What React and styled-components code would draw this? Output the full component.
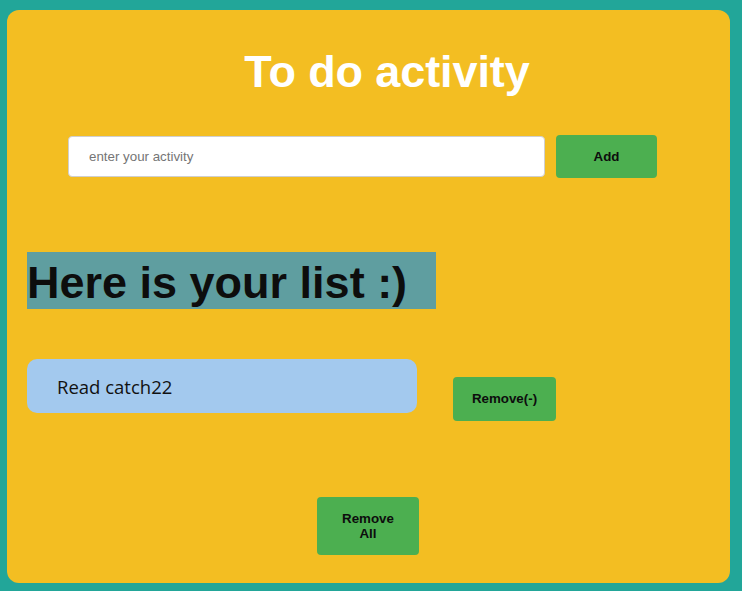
import React from "react";
import styled, { createGlobalStyle } from "styled-components";

const Global = createGlobalStyle`
  html, body { margin: 0; padding: 0; }
  body {
    background: #22a699;
    padding: 10px 12px 8px 7px;
    font-family: "Liberation Sans", Arial, sans-serif;
  }
`;

const Card = styled.main`
  width: 723px;
  height: 573px;
  box-sizing: border-box;
  background: #f3be22;
  border-radius: 12px;
  display: flex;
  flex-direction: column;
`;

const Title = styled.h1`
  margin: 36px 0 0 0;
  padding-left: 37px;
  text-align: center;
  color: #fff;
  font-family: "Liberation Sans", Arial, sans-serif;
  font-weight: 700;
  font-size: 45px;
  line-height: 52px;
  letter-spacing: -0.1px;
`;

const Form = styled.form`
  margin: 37px 0 0 61px;
  display: flex;
  align-items: center;
  gap: 11px;
`;

const Input = styled.input`
  width: 477px;
  height: 41px;
  box-sizing: border-box;
  border: 1px solid #cfcfcf;
  border-radius: 4px;
  background: #fff;
  padding: 0 20px;
  font-family: "Liberation Sans", Arial, sans-serif;
  font-size: 13.33px;
  outline: none;
  &::placeholder { color: #757575; }
`;

const Button = styled.button`
  width: ${(p) => p.$w || 101}px;
  padding: 14px ${(p) => p.$px || 0}px;
  border: none;
  border-radius: 4px;
  background: #4caf50;
  color: #0d0d0d;
  font-family: "Liberation Sans", Arial, sans-serif;
  font-weight: 700;
  font-size: 13.33px;
  line-height: 15.3px;
  text-align: center;
  cursor: pointer;
  flex-shrink: 0;
`;

const Heading = styled.h2`
  margin: 74px 0 0 20px;
  width: 409px;
  height: 57px;
  box-sizing: border-box;
  padding-top: 5px;
  background: #5f9ea0;
  color: #0d0d0d;
  font-family: "Liberation Sans", Arial, sans-serif;
  font-weight: 700;
  font-size: 45px;
  line-height: 52px;
  white-space: nowrap;
`;

const Row = styled.div`
  margin: 50px 0 0 20px;
  display: flex;
  align-items: flex-start;
  gap: 36px;
`;

const Item = styled.div`
  width: 390px;
  height: 54px;
  box-sizing: border-box;
  padding-left: 30px;
  display: flex;
  align-items: center;
  background: #a3c9ee;
  border-radius: 10px;
  color: #111;
  font-family: "Open Sans", "Noto Sans", sans-serif;
  font-size: 18.5px;
`;

const RemoveBtn = styled(Button)`
  margin-top: 18px;
`;

const RemoveAll = styled(Button)`
  align-self: center;
  margin-top: 76px;
  margin-right: 1px;
`;

export default function App() {
  return (
    <>
      <Global />
      <Card>
        <Title>To do activity</Title>
        <Form onSubmit={(e) => e.preventDefault()}>
          <Input placeholder="enter your activity" />
          <Button type="submit" $w={101}>Add</Button>
        </Form>
        <Heading>Here is your list :)</Heading>
        <Row>
          <Item>Read catch22</Item>
          <RemoveBtn $w={103}>Remove(-)</RemoveBtn>
        </Row>
        <RemoveAll $w={102} $px={20}>Remove All</RemoveAll>
      </Card>
    </>
  );
}
